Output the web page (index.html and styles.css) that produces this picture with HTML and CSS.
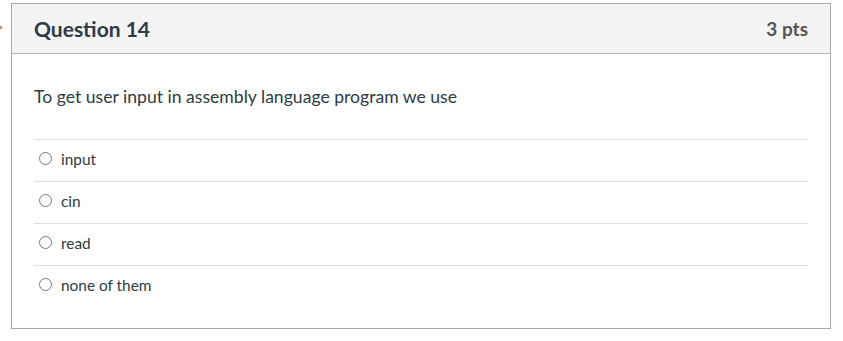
FILE: index.html
```html
<!DOCTYPE html>
<html lang="en">
<head>
<meta charset="UTF-8">
<meta name="viewport" content="width=device-width, initial-scale=1.0">
<title>Question 14</title>
<link rel="stylesheet" href="styles.css">
</head>
<body>
<div class="page">
<span class="flag-edge"></span>
<div class="question">
<div class="question-header">
<span class="question-name">Question 14</span>
<span class="question-points">3 pts</span>
</div>
<div class="question-body">
<div class="question-text">To get user input in assembly language program we use</div>
<div class="answers">
<label class="answer"><span class="radio"></span><span class="answer-text">input</span></label>
<label class="answer"><span class="radio"></span><span class="answer-text">cin</span></label>
<label class="answer"><span class="radio"></span><span class="answer-text">read</span></label>
<label class="answer"><span class="radio"></span><span class="answer-text">none of them</span></label>
</div>
</div>
</div>
</div>
</body>
</html>
```

FILE: styles.css
```css
body {
font-family: Lato, "Open Sans", sans-serif; margin: 0;
padding: 0; background-color: #fff; color: #2d3b45;
}

.page {
display: flex; align-items: flex-start;
padding-top: 3px;
}

/* bit of the flag icon cut off at the left edge */
.flag-edge {
width: 2px; height: 3px; margin-top: 23px; margin-right: 9px;
background-color: #b8966a;
}

.question {
width: 818px;
border: 1px solid #a9a9a9;
}

.question-header {
display: flex; justify-content: space-between; align-items: center;
height: 49px; padding: 0 22px;
background-color: #f4f4f4;
border-bottom: 1px solid #b5b5b5;
}

.question-name {
font-size: 21px; font-weight: bold; color: #2d3b45;
}

.question-points {
font-size: 19px; font-weight: bold; color: #555;
}

.question-body {
padding: 31px 22px 21px;
}

.question-text {
font-size: 17.6px; line-height: 24px;
margin-bottom: 30px;
}

.answer {
display: flex; align-items: center;
height: 42px; border-top: 1px solid #ddd;
font-size: 15.4px; padding-bottom: 4px; box-sizing: border-box;
}

.radio {
width: 11px; height: 11px; border: 1px solid #777; border-radius: 50%;
margin-left: 5px; margin-right: 9px;
}

.answer-text {
color: #2d3b45;
}
```
